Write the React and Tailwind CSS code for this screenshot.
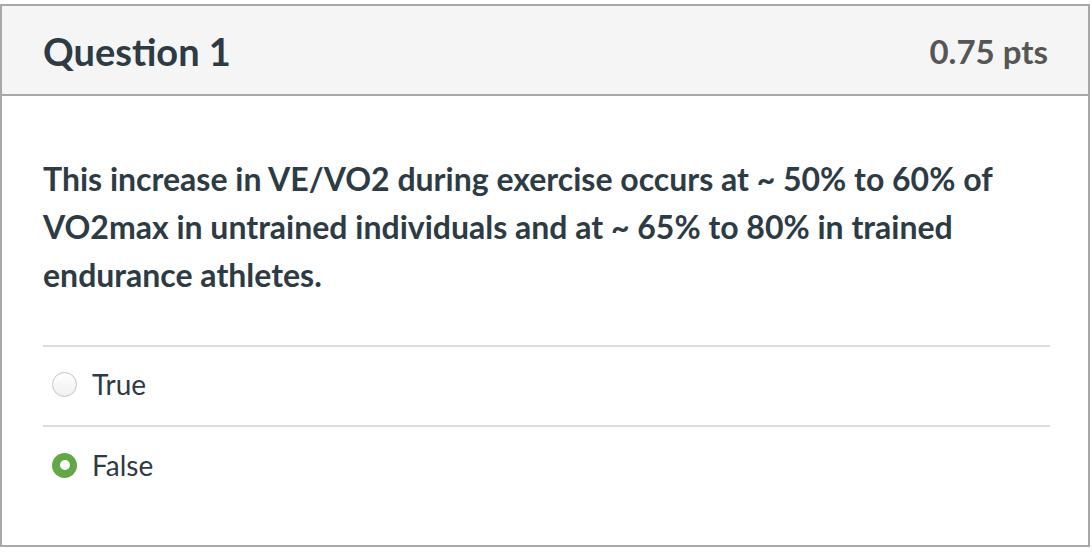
export default function App() {
  const font = { fontFamily: 'Lato, "Noto Sans", sans-serif' };
  return (
    <div className="w-[1092px] h-[554px] bg-white pt-[4px]" style={font}>
      <div className="w-[1090px] border-2 border-[#a8a8a8] bg-white">
        <div className="h-[90px] bg-[#f5f5f5] border-b-2 border-[#a8a8a8] flex items-center justify-between pl-[41px] pr-[40px]">
          <h2 className="text-[38px] font-bold text-[#2d3b45] leading-none pt-[2px]">Question 1</h2>
          <div className="text-[33px] font-bold text-[#565656] leading-none pt-[2px]">0.75 pts</div>
        </div>
        <div className="pl-[41px] pr-[38px] pt-[59px] pb-[38px]">
          <p className="text-[32px] font-bold text-[#2d3b45] leading-[48px]">
            This increase in VE/VO2 during exercise occurs at ~ 50% to 60% of VO2max in untrained individuals and at ~ 65% to 80% in trained endurance athletes.
          </p>
          <div className="mt-[46px] border-t-2 border-[#dcdcdc]">
            <div className="h-[80px] flex items-center pl-[9px] pb-[4px] border-b-2 border-[#dcdcdc]">
              <span className="w-[25px] h-[25px] rounded-full border border-[#c4c4c4] bg-gradient-to-b from-white to-[#f0f0f0] shrink-0"></span>
              <span className="ml-[15px] text-[28px] text-[#2d3b45] leading-none">True</span>
            </div>
            <div className="h-[80px] flex items-center pl-[9px] pb-[4px]">
              <span className="w-[25px] h-[25px] rounded-full bg-[#63a846] flex items-center justify-center shrink-0">
                <span className="w-[10px] h-[10px] rounded-full bg-white"></span>
              </span>
              <span className="ml-[15px] text-[28px] text-[#2d3b45] leading-none">False</span>
            </div>
          </div>
        </div>
      </div>
    </div>
  );
}
